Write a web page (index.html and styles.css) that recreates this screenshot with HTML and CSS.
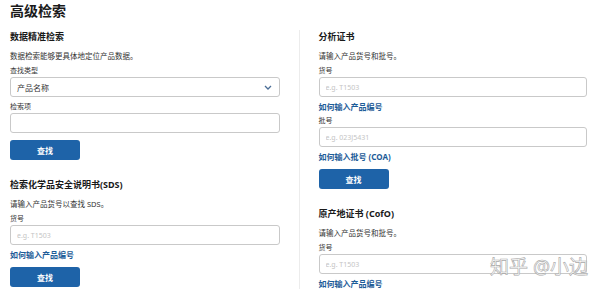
FILE: index.html
```html
<!DOCTYPE html>
<html lang="zh-CN">
<head>
    <meta charset="UTF-8">
    <meta name="viewport" content="width=device-width, initial-scale=1.0">
    <title>高级检索</title>
    <link rel="stylesheet" href="styles.css">
</head>
<body>

<h1 class="page-title">高级检索</h1>

<div class="columns">

    <!-- Left column -->
    <div class="column column-left">
        <section class="search-block">
            <h2>数据精准检索</h2>
            <p class="desc">数据检索能够更具体地定位产品数据。</p>
            <div class="field">
                <label for="searchType">查找类型</label>
                <div class="select-box" id="searchType">
                    <span>产品名称</span>
                    <svg width="8" height="5" viewBox="0 0 8 5"><path d="M1 1l3 3 3-3" fill="none" stroke="#4a6d96" stroke-width="1.3"/></svg>
                </div>
            </div>
            <div class="field">
                <label for="searchTerm">检索项</label>
                <input type="text" id="searchTerm">
            </div>
            <button type="button" class="search-btn">查找</button>
        </section>

        <section class="search-block block-gap">
            <h2>检索化学品安全说明书(SDS)</h2>
            <p class="desc">请输入产品货号以查找 SDS。</p>
            <div class="field">
                <label for="sdsNo">货号</label>
                <input type="text" id="sdsNo" placeholder="e.g. T1503">
            </div>
            <a href="#" class="help-link">如何输入产品编号</a>
            <button type="button" class="search-btn">查找</button>
        </section>
    </div>

    <!-- Right column -->
    <div class="column column-right">
        <section class="search-block">
            <h2>分析证书</h2>
            <p class="desc">请输入产品货号和批号。</p>
            <div class="field">
                <label for="coaNo">货号</label>
                <input type="text" id="coaNo" placeholder="e.g. T1503">
            </div>
            <a href="#" class="help-link">如何输入产品编号</a>
            <div class="field">
                <label for="coaLot">批号</label>
                <input type="text" id="coaLot" placeholder="e.g. 023J5431">
            </div>
            <a href="#" class="help-link">如何输入批号 (COA)</a>
            <button type="button" class="search-btn">查找</button>
        </section>

        <section class="search-block block-gap">
            <h2>原产地证书 (CofO)</h2>
            <p class="desc">请输入产品货号和批号。</p>
            <div class="field">
                <label for="cofoNo">货号</label>
                <input type="text" id="cofoNo" placeholder="e.g. T1503">
            </div>
            <a href="#" class="help-link">如何输入产品编号</a>
        </section>
    </div>
</div>

<div class="watermark">知乎 @小边</div>

</body>
</html>
```

FILE: styles.css
```css
body {
    font-family: "Noto Sans", "Noto Sans CJK SC", sans-serif;
    margin: 0;
    padding: 0 13px 0 10px;
    color: #222;
    background: #fff;
    overflow: hidden;
    height: 293px;
    position: relative;
}

.page-title {
    margin: 0;
    font-size: 14px;
    line-height: 21px;
    font-weight: 700;
    color: #1a1a1a;
}

.columns {
    display: grid;
    grid-template-columns: 1fr 1fr;
    margin-top: 9px;
}

.column-left {
    padding-right: 19px;
}

.column-right {
    border-left: 1px solid #ececec;
    padding-left: 19px;
}

.search-block h2 {
    margin: 0;
    font-size: 9px;
    line-height: 14px;
    font-weight: 700;
    color: #1a1a1a;
}

.block-gap {
    margin-top: 18px;
}

.desc {
    margin: 6px 0 0;
    font-size: 7.5px;
    line-height: 12px;
    color: #333;
}

.field {
    margin-top: 4px;
}

.field + .field {
    margin-top: 5px;
}

.field label {
    display: block;
    font-size: 7px;
    line-height: 9px;
    margin-bottom: 2px;
    color: #333;
}

.field input,
.select-box {
    display: block;
    box-sizing: border-box;
    width: 100%;
    height: 20px;
    margin: 0;
    padding: 0 6px;
    border: 1px solid #c9c9c9;
    border-radius: 3px;
    background: #fff;
    font-family: inherit;
    font-size: 7px;
    color: #333;
    outline: none;
}

.field input::placeholder {
    color: #c4c4c4;
}

.select-box {
    display: flex;
    align-items: center;
    justify-content: space-between;
    font-size: 8px;
    padding: 0 7px 0 6px;
}

.help-link {
    display: block;
    margin-top: 4px;
    font-size: 8px;
    line-height: 11px;
    font-weight: 700;
    color: #1d5c98;
    text-decoration: none;
}

.search-btn {
    display: block;
    width: 70px;
    height: 20px;
    margin-top: 7px;
    padding: 0;
    border: none;
    border-radius: 3px;
    background-color: #1e63a8;
    color: #fff;
    font-family: inherit;
    font-size: 8px;
    font-weight: 700;
    cursor: pointer;
}

.help-link + .search-btn {
    margin-top: 7px;
}

.watermark {
    position: absolute;
    right: 12px;
    bottom: 15px;
    font-size: 19px;
    line-height: 22px;
    color: rgba(255, 255, 255, 0.85);
    -webkit-text-stroke: 0.6px #a8a8a8;
}
```
